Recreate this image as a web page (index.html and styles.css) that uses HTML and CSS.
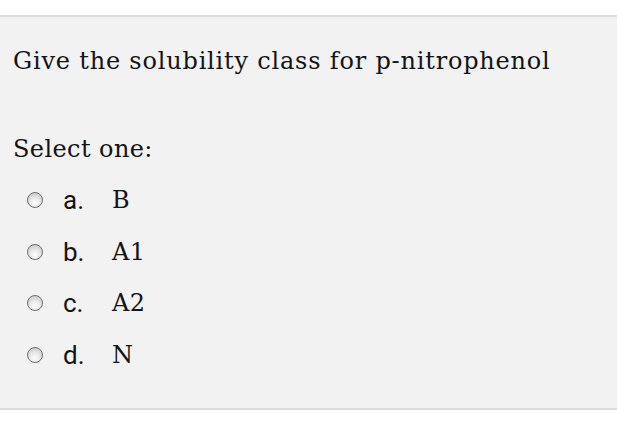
FILE: index.html
```html
<!DOCTYPE html>
<html>
<head>
<meta charset="utf-8">
<link rel="stylesheet" href="styles.css">
</head>
<body>
<div class="question">
  <p class="qtext">Give the solubility class for p-nitrophenol</p>
  <p class="prompt">Select one:</p>
  <div class="answers">
    <label class="option"><span class="radio"></span><span class="letter">a.</span><span class="value">B</span></label>
    <label class="option"><span class="radio"></span><span class="letter">b.</span><span class="value">A1</span></label>
    <label class="option"><span class="radio"></span><span class="letter">c.</span><span class="value">A2</span></label>
    <label class="option"><span class="radio"></span><span class="letter">d.</span><span class="value">N</span></label>
  </div>
</div>
</body>
</html>
```

FILE: styles.css
```css
html, body {
  margin: 0;
  padding: 0;
  background: #ffffff;
}
body {
  padding-top: 15px;
  font-family: "DejaVu Serif", "Liberation Serif", serif;
  color: #141414;
}
.question {
  background: #f2f2f2;
  border-top: 2px solid #dcdcdc;
  border-bottom: 2px solid #dcdcdc;
  padding: 0 13px;
  height: 395px;
  box-sizing: border-box;
}
.qtext {
  margin: 0;
  padding-top: 28px;
  font-size: 24px;
  letter-spacing: 0.8px;
  line-height: 32px;
}
.prompt {
  margin: 0;
  padding-top: 56px;
  font-size: 24px;
  letter-spacing: 0.4px;
  line-height: 32px;
}
.answers {
  display: flex;
  flex-direction: column;
  padding-top: 19px;
  gap: 19.5px;
}
.option {
  display: flex;
  align-items: center;
  height: 32px;
  font-size: 24px;
}
.radio {
  width: 14px;
  height: 14px;
  border-radius: 50%;
  border: 1px solid #6e6e6e;
  background: radial-gradient(circle at 50% 70%, #ffffff 0%, #e6e6e6 45%, #bdbdbd 100%);
  margin-left: 14px;
  margin-right: 20px;
}
.letter {
  width: 49px;
  font-family: "Roboto", "Liberation Sans", sans-serif;
  font-size: 26px;
}
.value {
  letter-spacing: 0.5px;
}
```
